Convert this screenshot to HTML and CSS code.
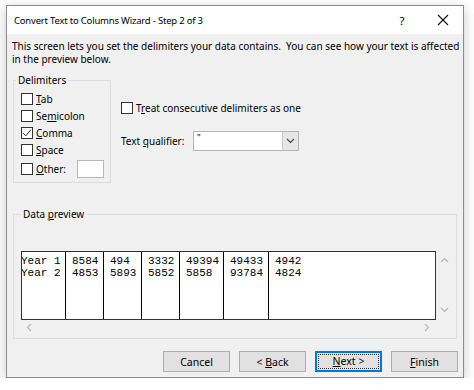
FILE: index.html
```html
<!DOCTYPE html>
<html lang="en">
<head>
    <meta charset="UTF-8">
    <title>Convert Text to Columns Wizard - Step 2 of 3</title>
    <link rel="stylesheet" href="styles.css">
</head>
<body>
    <div class="window">
        <div class="titlebar">
            <span class="title">Convert Text to Columns Wizard - Step 2 of 3</span>
            <span class="help">?</span>
            <span class="close">
                <svg width="12" height="12" viewBox="0 0 12 12"><path d="M1 1L11 11M11 1L1 11" stroke="#111" stroke-width="1.1" fill="none"/></svg>
            </span>
        </div>

        <div class="content">
            <p class="intro">This screen lets you set the delimiters your data contains.&nbsp; You can see how your text is affected<br>in the preview below.</p>

            <div class="options">
                <!-- Delimitadores -->
                <fieldset class="group delimiters">
                    <legend>Delimiters</legend>
                    <label class="check"><span class="box"></span><span><u>T</u>ab</span></label>
                    <label class="check"><span class="box"></span><span>Se<u>m</u>icolon</span></label>
                    <label class="check"><span class="box checked">
                        <svg width="10" height="10" viewBox="0 0 10 10"><path d="M1.2 5.2L3.8 7.8L8.8 1.8" stroke="#222" stroke-width="1" fill="none"/></svg>
                    </span><span><u>C</u>omma</span></label>
                    <label class="check"><span class="box"></span><span><u>S</u>pace</span></label>
                    <div class="check other">
                        <span class="box"></span><span class="other-label"><u>O</u>ther:</span>
                        <span class="textbox"></span>
                    </div>
                </fieldset>

                <div class="side">
                    <label class="check"><span class="box"></span><span>T<u>r</u>eat consecutive delimiters as one</span></label>
                    <div class="qualifier">
                        <span class="qualifier-label">Text <u>q</u>ualifier:</span>
                        <div class="combo">
                            <span class="combo-value">"</span>
                            <span class="combo-button">
                                <svg width="9" height="6" viewBox="0 0 9 6"><path d="M1 1L4.5 4.5L8 1" stroke="#444" stroke-width="1.1" fill="none"/></svg>
                            </span>
                        </div>
                    </div>
                </div>
            </div>

            <!-- Vista previa -->
            <fieldset class="group preview">
                <legend>Data <u>p</u>review</legend>
                <div class="viewer">
                    <div class="sheet">
                        <div class="col c1"><div>Year 1</div><div>Year 2</div></div>
                        <div class="col c2"><div>8584</div><div>4853</div></div>
                        <div class="col c3"><div>494</div><div>5893</div></div>
                        <div class="col c4"><div>3332</div><div>5852</div></div>
                        <div class="col c5"><div>49394</div><div>5858</div></div>
                        <div class="col c6"><div>49433</div><div>93784</div></div>
                        <div class="col c7"><div>4942</div><div>4824</div></div>
                    </div>
                    <div class="vscroll">
                        <svg width="9" height="6" viewBox="0 0 9 6"><path d="M1 5L4.5 1.5L8 5" stroke="#b4b4b4" stroke-width="1.1" fill="none"/></svg>
                        <svg width="9" height="6" viewBox="0 0 9 6"><path d="M1 1L4.5 4.5L8 1" stroke="#b4b4b4" stroke-width="1.1" fill="none"/></svg>
                    </div>
                    <div class="hscroll">
                        <svg width="6" height="9" viewBox="0 0 6 9"><path d="M5 1L1.5 4.5L5 8" stroke="#b4b4b4" stroke-width="1.1" fill="none"/></svg>
                        <svg width="6" height="9" viewBox="0 0 6 9"><path d="M1 1L4.5 4.5L1 8" stroke="#b4b4b4" stroke-width="1.1" fill="none"/></svg>
                    </div>
                </div>
            </fieldset>

            <div class="buttons">
                <button type="button">Cancel</button>
                <button type="button">&lt; <u>B</u>ack</button>
                <button type="button" class="default"><span><u>N</u>ext &gt;</span></button>
                <button type="button"><u>F</u>inish</button>
            </div>
        </div>
    </div>
</body>
</html>
```

FILE: styles.css
```css
html, body {
    margin: 0;
    padding: 0;
    background: #ffffff;
    font-family: "Noto Sans", "Open Sans", sans-serif;
    font-size: 10px;
    color: #000;
}

.window {
    margin: 5px 0 0 6px;
    width: 458px;
    height: 373px;
    box-sizing: border-box;
    border: 1px solid #8c8c8c;
    background: #f0f0f0;
    box-shadow: 0 3px 12px rgba(0, 0, 0, 0.22);
    display: flex;
    flex-direction: column;
}

.titlebar {
    height: 28px;
    flex: none;
    background: #ffffff;
    display: flex;
    align-items: center;
    padding-left: 7px;
}

.title {
    flex: 1;
    font-size: 9.5px;
    letter-spacing: -0.2px;
}

.help {
    width: 20px;
    text-align: center;
    font-size: 11.5px;
    margin-right: 21px;
}

.close {
    width: 20px;
    height: 12px;
    display: flex;
    justify-content: center;
    margin-right: 10px;
}

.content {
    flex: 1;
    padding: 0 5px 0 0;
}

.intro {
    margin: 6px 0 0 5px;
    line-height: 13px;
    white-space: nowrap;
}

u {
    text-decoration: underline;
    text-underline-offset: 1px;
}

/* cajas de grupo */
.group {
    margin: 0 0 0 6px;
    padding: 0 0 0 2px;
    border: 1px solid #dcdcdc;
    box-sizing: border-box;
    min-width: 0;
}

.group legend {
    padding: 0 2px;
    line-height: 12px;
}

.options {
    display: flex;
    margin-top: 8px;
}

.delimiters {
    width: 98px;
    height: 109px;
    padding-top: 4px;
}

.check {
    display: flex;
    align-items: center;
    height: 17px;
    margin-left: 5px;
    white-space: nowrap;
}

.box {
    width: 12px;
    height: 12px;
    box-sizing: border-box;
    border: 1px solid #333;
    background: #fff;
    margin-right: 3px;
    flex: none;
    display: flex;
    align-items: center;
    justify-content: center;
}

.other {
    height: 20px;
    margin-top: 1px;
}

.other-label {
    width: 41px;
}

.textbox {
    width: 27px;
    height: 18px;
    box-sizing: border-box;
    border: 1px solid #b8b8b8;
    background: #fff;
}

.side {
    margin: 25px 0 0 10px;
}

.side .check {
    margin-left: 0;
}

.qualifier {
    display: flex;
    align-items: center;
    height: 20px;
    margin-top: 15px;
}

.qualifier-label {
    width: 72px;
}

.combo {
    width: 106px;
    height: 20px;
    box-sizing: border-box;
    border: 1px solid #b4b4b4;
    background: #fff;
    display: flex;
}

.combo-value {
    flex: 1;
    padding-left: 3px;
    font-size: 9px;
    line-height: 12px;
}

.combo-button {
    width: 15px;
    background: #e6e6e6;
    border-left: 1px solid #c8c8c8;
    display: flex;
    align-items: center;
    justify-content: center;
}

/* vista previa */
.preview {
    margin-top: 25px;
    width: 444px;
    height: 131px;
    padding: 31px 0 0 7px;
}

.viewer {
    display: grid;
    grid-template-columns: 415px 17px;
    grid-template-rows: 69px 14px;
}

.sheet {
    border: 1px solid #333;
    background: #fff;
    display: flex;
    font-family: "Liberation Mono", "Courier New", monospace;
    font-size: 11px;
    line-height: 12px;
    padding-top: 3px;
    overflow: hidden;
}

.col {
    border-right: 1px solid #000;
    padding-left: 6px;
    margin-top: -3px;
    padding-top: 3px;
    box-sizing: border-box;
    white-space: nowrap;
    overflow: hidden;
}

.c1 { width: 44px; padding-left: 0; text-indent: -1px; }
.c2, .c3, .c4 { width: 38px; }
.c5 { width: 44px; }
.c6 { width: 45px; }
.c7 { flex: 1; border-right: none; }

.vscroll {
    display: flex;
    flex-direction: column;
    justify-content: space-between;
    align-items: center;
    padding: 6px 0 7px 0;
}

.hscroll {
    display: flex;
    justify-content: space-between;
    align-items: center;
    padding: 0 6px 0 5px;
}

/* botones */
.buttons {
    display: flex;
    justify-content: flex-end;
    gap: 9px;
    margin-top: 12px;
}

.buttons button {
    width: 67px;
    height: 21px;
    padding: 0;
    background: #e1e1e1;
    border: 1px solid #adadad;
    font-family: inherit;
    font-size: 10.5px;
    color: #000;
}

.buttons .default {
    border: 2px solid #0078d7;
    padding: 1px;
}

.buttons .default span {
    display: block;
    height: 100%;
    box-sizing: border-box;
    border: 1px dotted #333;
    line-height: 13px;
}
```
